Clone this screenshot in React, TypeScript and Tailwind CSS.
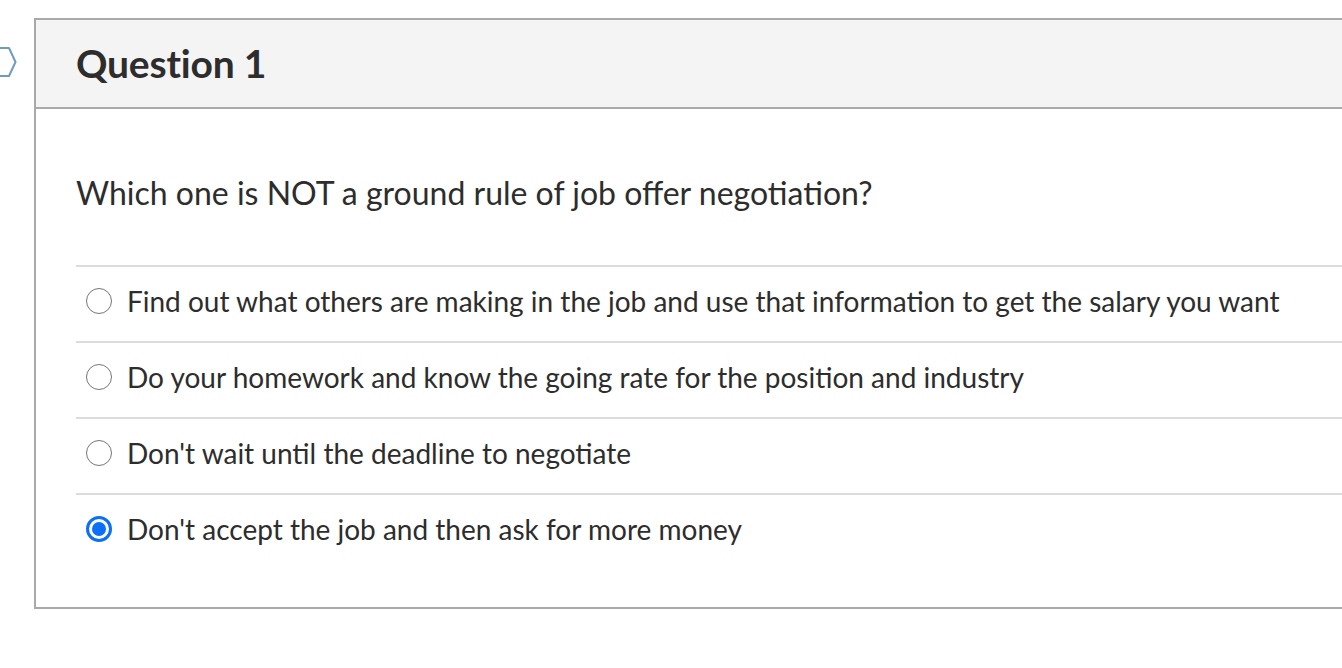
const answers = [
  {text: "Find out what others are making in the job and use that information to get the salary you want", checked: false},
  {text: "Do your homework and know the going rate for the position and industry", checked: false},
  {text: "Don't wait until the deadline to negotiate", checked: false},
  {text: "Don't accept the job and then ask for more money", checked: true},
];

function Radio({checked}: {checked: boolean}) {
  if (checked) {
    return (
      <span className="flex h-[26px] w-[26px] shrink-0 items-center justify-center rounded-full border-[3px] border-[#0b6ff7] bg-white">
        <span className="h-[14px] w-[14px] rounded-full bg-[#0b6ff7]" />
      </span>
    );
  }
  return <span className="h-[26px] w-[26px] shrink-0 rounded-full border-[1.5px] border-[#767676] bg-white" />;
}

export default function App() {
  return (
    <div className="min-h-[668px] w-full overflow-hidden bg-white font-['Lato',sans-serif] text-[#2d2d2d]">
      <div className="flex pt-[18px]">
        <div className="w-[34px] shrink-0 pt-[28px]">
          <svg width="18" height="32" viewBox="0 0 18 32" aria-hidden="true">
            <polyline
              points="-2,2 9,2 15.5,16 9,30 -2,30"
              fill="none"
              stroke="#6f9cbb"
              strokeWidth="2"
              strokeLinejoin="round"
            />
          </svg>
        </div>
        <div className="w-[1330px] shrink-0 border-2 border-[#a9a9a9]">
          <div className="flex h-[89px] items-center border-b-2 border-[#a9a9a9] bg-[#f4f4f4] pl-[40px]">
            <h2 className="text-[39px] font-bold leading-none tracking-[-0.2px] text-[#2d2d2d]">Question 1</h2>
          </div>
          <div className="pl-[40px] pt-[62px] pb-[38px]">
            <p className="text-[32px] leading-[44px]">Which one is NOT a ground rule of job offer negotiation?</p>
            <ul className="mt-[50px]">
              {answers.map((a) => (
                <li key={a.text} className="flex h-[76px] items-center gap-[15px] border-t-2 border-[#dcdcdc] pb-[6px] pl-[10px]">
                  <Radio checked={a.checked} />
                  <span className="text-[28px] leading-none">{a.text}</span>
                </li>
              ))}
            </ul>
          </div>
        </div>
      </div>
    </div>
  );
}
